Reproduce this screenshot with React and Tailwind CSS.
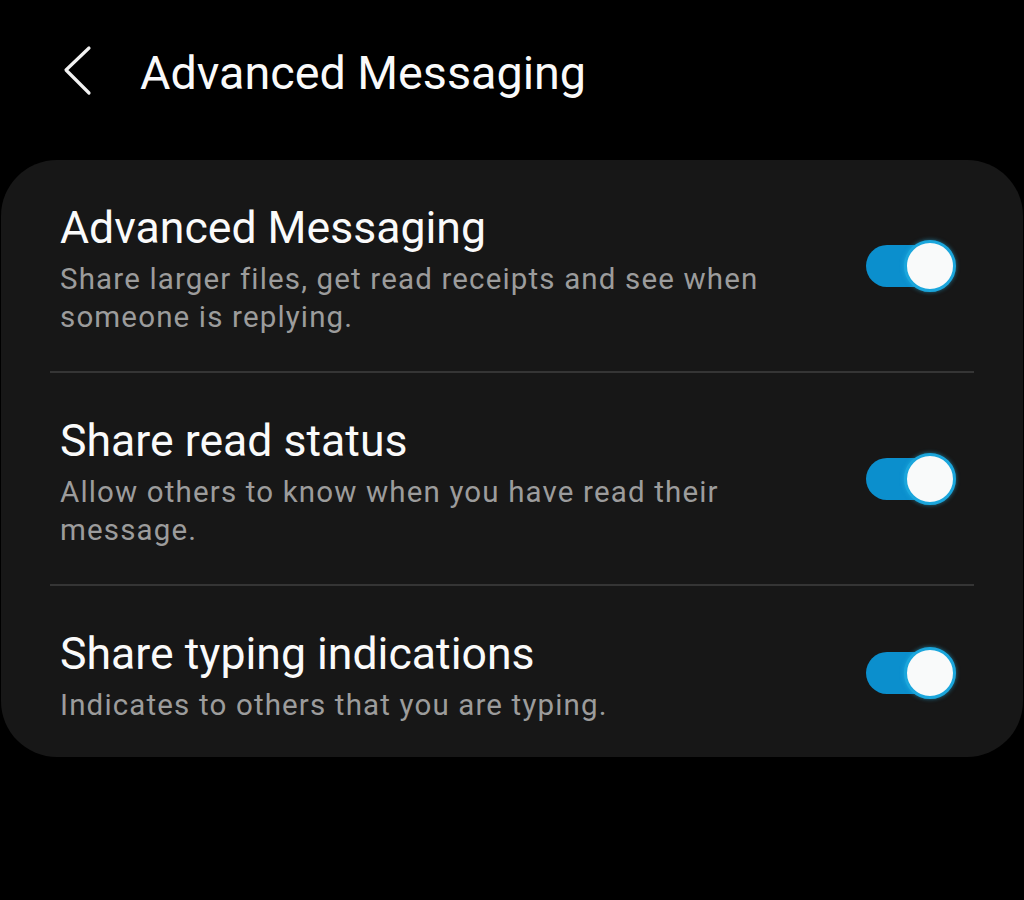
import React from "react";

function Toggle() {
  return (
    <div className="relative w-[90px] h-[54px] flex items-center shrink-0">
      <div className="w-[80px] h-[42px] rounded-full bg-[#0b8fcd]" />
      <div className="absolute right-0 top-[1px] w-[52px] h-[52px] rounded-full bg-[#f9fafa] border-[3px] border-[#1ba6dc] shadow-[0_0_4px_rgba(40,180,230,0.6)]" />
    </div>
  );
}

function Row({ title, sub, last }) {
  return (
    <div className={`flex items-center justify-between pl-[59px] pr-[67px] pt-[42px] ${last ? "pb-[33px]" : "pb-[35px]"}`}>
      <div className="flex flex-col">
        <div className="text-[44.6px] leading-[52px] text-[#fafafa]">{title}</div>
        <div className="mt-[6px] text-[29.5px] leading-[38px] tracking-[1.15px] text-[#9c9c9c] max-w-[740px]">{sub}</div>
      </div>
      <div className="-mt-[6px]">
        <Toggle />
      </div>
    </div>
  );
}

export default function App() {
  return (
    <div className="w-[1024px] h-[900px] bg-black" style={{ fontFamily: "Roboto, 'Noto Sans', sans-serif" }}>
      <div className="h-[146px] flex items-center">
        <svg width="40" height="60" viewBox="0 0 40 60" className="ml-[56px] -mt-[6px]">
          <polyline points="33,8 10,30 33,53" fill="none" stroke="#f2f2f2" strokeWidth="3.2" strokeLinecap="round" strokeLinejoin="round" />
        </svg>
        <div className="ml-[44px] text-[46.7px] leading-[56px] text-[#fafafa]">Advanced Messaging</div>
      </div>
      <div className="mt-[14px] mx-[1px] bg-[#171717] rounded-[56px]">
        <Row
          title="Advanced Messaging"
          sub="Share larger files, get read receipts and see when someone is replying."
        />
        <div className="mx-[49px] h-[2px] bg-[#353535]" />
        <Row
          title="Share read status"
          sub="Allow others to know when you have read their message."
        />
        <div className="mx-[49px] h-[2px] bg-[#353535]" />
        <Row title="Share typing indications" sub="Indicates to others that you are typing." last />
      </div>
    </div>
  );
}
